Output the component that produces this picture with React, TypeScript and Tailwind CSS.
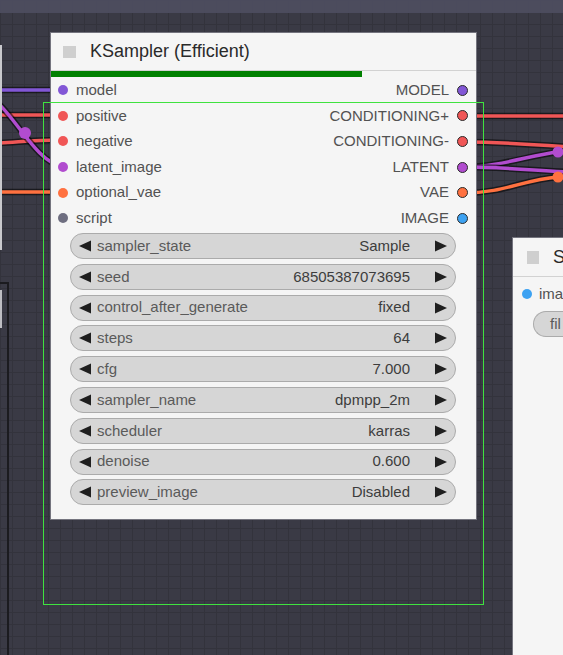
import React from 'react';

type Slot = { label: string; color: string };

const inputs: Slot[] = [
  { label: 'model', color: '#8257d6' },
  { label: 'positive', color: '#f05656' },
  { label: 'negative', color: '#f05656' },
  { label: 'latent_image', color: '#b14ccf' },
  { label: 'optional_vae', color: '#ff7140' },
  { label: 'script', color: '#6e6e80' },
];

const outputs: Slot[] = [
  { label: 'MODEL', color: '#8257d6' },
  { label: 'CONDITIONING+', color: '#f05656' },
  { label: 'CONDITIONING-', color: '#f05656' },
  { label: 'LATENT', color: '#b14ccf' },
  { label: 'VAE', color: '#ff7140' },
  { label: 'IMAGE', color: '#3da2f2' },
];

const widgets: [string, string][] = [
  ['sampler_state', 'Sample'],
  ['seed', '68505387073695'],
  ['control_after_generate', 'fixed'],
  ['steps', '64'],
  ['cfg', '7.000'],
  ['sampler_name', 'dpmpp_2m'],
  ['scheduler', 'karras'],
  ['denoise', '0.600'],
  ['preview_image', 'Disabled'],
];

const Arrow = ({ dir }: { dir: 'left' | 'right' }) => (
  <svg width="12" height="12" viewBox="0 0 12 12" className="shrink-0">
    {dir === 'left' ? (
      <polygon points="12,0.5 12,11.5 0,6" fill="#1f1f1f" />
    ) : (
      <polygon points="0,0.5 0,11.5 12,6" fill="#1f1f1f" />
    )}
  </svg>
);

const Widget = ({ label, value }: { label: string; value: string }) => (
  <div className="flex h-[26px] items-center rounded-full border border-[#ababab] bg-[#d6d6d6] pl-[8px] pr-[8px] text-[15px]">
    <Arrow dir="left" />
    <span className="ml-[6px] flex-1 text-[#5a5a5a]">{label}</span>
    <span className="text-[#3d3d3d]">{value}</span>
    <span className="ml-[25px] flex">
      <Arrow dir="right" />
    </span>
  </div>
);

// wire with the dark outline litegraph draws under it
const Wire = ({ d, color }: { d: string; color: string }) => (
  <g fill="none" strokeLinecap="round">
    <path d={d} stroke="#000" strokeOpacity="0.55" strokeWidth="6.5" />
    <path d={d} stroke={color} strokeWidth="3.5" />
  </g>
);

const Wires = () => (
  <svg className="absolute inset-0" width="563" height="655">
    <Wire d="M0 90 L60 90" color="#8257d6" />
    <Wire d="M0 115 L60 115" color="#f05656" />
    <Wire d="M0 143 C 20 142, 32 140, 60 140" color="#f05656" />
    <Wire d="M-20 92 C 10 100, 30 160, 63 167" color="#b14ccf" />
    <Wire d="M0 192 L60 192" color="#ff7140" />
    <circle cx="25" cy="133" r="6" fill="#b14ccf" />

    <Wire d="M463 116 L570 116" color="#f05656" />
    <Wire d="M463 142 C 500 142, 530 144, 570 147" color="#f05656" />
    <Wire d="M463 167 C 500 167, 530 155, 558 152" color="#b14ccf" />
    <Wire d="M463 167 C 500 167, 530 170, 570 172" color="#b14ccf" />
    <Wire d="M463 193 C 505 193, 522 180, 558 177" color="#ff7140" />
    <circle cx="558" cy="152" r="5.5" fill="#b14ccf" />
    <circle cx="558" cy="177" r="5.5" fill="#ff7140" />
  </svg>
);

const KSamplerNode = () => (
  <div className="absolute left-[51px] top-[33px] w-[425px] bg-[#f5f5f5] shadow-[0_0_0_1px_#74747e]">
    <div className="flex h-[38px] items-center border-b border-[#d2d2d2] pl-[12px]">
      <div className="h-[12px] w-[13px] bg-[#cfcfcf]" />
      <span className="ml-[14px] text-[18px] text-[#2a2a2a]">KSampler (Efficient)</span>
    </div>
    <div className="relative">
      <div className="absolute left-0 top-0 h-[6px] w-[311px] bg-[#008000]" />
      <div className="flex flex-col pt-[6.5px]">
        {inputs.map((inp, i) => (
          <div key={inp.label} className="flex h-[25.6px] items-center text-[15px] text-[#525252]">
            <span
              className="ml-[7px] h-[10px] w-[10px] rounded-full"
              style={{ backgroundColor: inp.color }}
            />
            <span className="ml-[8px] flex-1">{inp.label}</span>
            <span>{outputs[i].label}</span>
            <span
              className="ml-[8px] mr-[8px] h-[11px] w-[11px] rounded-full border border-[#2a2a2a]"
              style={{ backgroundColor: outputs[i].color }}
            />
          </div>
        ))}
      </div>
      <div className="flex flex-col gap-[4.8px] pb-[14px] pl-[19px] pr-[20px] pt-[2px]">
        {widgets.map(([l, v]) => (
          <Widget key={l} label={l} value={v} />
        ))}
      </div>
    </div>
  </div>
);

const SaveNode = () => (
  <div className="absolute left-[513px] top-[238px] h-[420px] w-[80px] bg-[#f5f5f5] shadow-[0_0_0_1px_#74747e]">
    <div className="flex h-[39px] items-center border-b border-[#d2d2d2] pl-[14px]">
      <div className="h-[13px] w-[12px] bg-[#cfcfcf]" />
      <span className="ml-[14px] text-[18px] text-[#2a2a2a]">S</span>
    </div>
    <div className="flex h-[34px] items-center pl-[9px] text-[15px] text-[#525252]">
      <span className="h-[10px] w-[10px] rounded-full bg-[#3da2f2]" />
      <span className="ml-[7px]">ima</span>
    </div>
    <div className="ml-[20px] flex h-[26px] items-center rounded-l-full border border-r-0 border-[#ababab] bg-[#d6d6d6] pl-[16px] text-[15px] text-[#5a5a5a]">
      fil
    </div>
  </div>
);

export default function App() {
  return (
    <div className="relative h-[655px] w-[563px] overflow-hidden bg-[#3a3a45] bg-[linear-gradient(to_right,#33333c_1px,transparent_1px),linear-gradient(to_bottom,#33333c_1px,transparent_1px)] bg-[size:12px_12px] font-['Liberation_Sans',Arial,sans-serif]">
      <div className="h-[13px] w-full bg-[#4d4d5f] opacity-95" />
      <Wires />

      {/* edges of nodes sitting off the left of the canvas */}
      <div className="absolute left-0 top-[45px] h-[205px] w-[2px] bg-[#c9c9cd]" />
      <div className="absolute left-0 top-[282px] h-[380px] w-[9px] border-r-2 border-t-2 border-[#1b1b1f]" />
      <div className="absolute left-0 top-[290px] h-[38px] w-[2px] bg-[#bdbdc2]" />

      <KSamplerNode />
      <SaveNode />

      <div className="pointer-events-none absolute left-[43px] top-[102px] h-[503px] w-[441px] border-[1.5px] border-[#3fe23f]" />
    </div>
  );
}
